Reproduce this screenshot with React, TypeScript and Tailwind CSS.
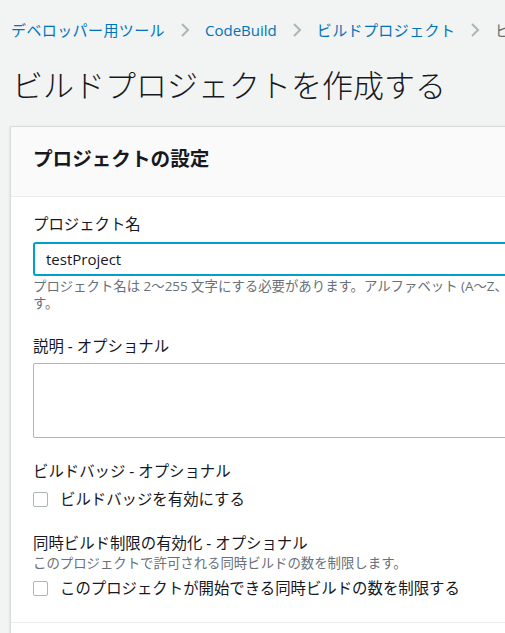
const font = { fontFamily: '"Open Sans", "Noto Sans CJK JP", sans-serif' };

function Chevron() {
  return (
    <svg width="12" height="18" viewBox="0 0 12 18" className="mx-[14px] shrink-0">
      <path d="M3 3l6 6-6 6" fill="none" stroke="#aab7b8" strokeWidth="2" />
    </svg>
  );
}

function Checkbox({ label }: { label: string }) {
  return (
    <label className="flex items-center gap-[12px] text-[15.4px] text-[#16191f]">
      <span className="h-[15px] w-[15px] shrink-0 rounded-[2px] border border-[#aab7b8] bg-white" />
      <span>{label}</span>
    </label>
  );
}

export default function App() {
  return (
    <div className="h-[633px] w-full overflow-hidden bg-[#f2f3f3]" style={font}>
      <div className="w-[900px]">
        <nav className="flex items-center whitespace-nowrap pl-[11px] pt-[19px] text-[15px] leading-[22px] tracking-[0.4px] text-[#0073bb]">
          <span>デベロッパー用ツール</span>
          <Chevron />
          <span className="tracking-normal">CodeBuild</span>
          <Chevron />
          <span>ビルドプロジェクト</span>
          <Chevron />
          <span className="text-[#687078]">ビルドプロジェクトを作成</span>
        </nav>
        <h1 className="mt-[24px] pl-[12px] text-[31px] font-light leading-[40px] text-[#16191f]">
          ビルドプロジェクトを作成する
        </h1>
        <section className="ml-[10px] mt-[21px] border-l border-t border-[#d5dbdb] bg-white shadow-sm">
          <div className="flex h-[70px] items-center border-b border-[#eaeded] bg-[#fafafa] pb-[5px] pl-[22px]">
            <h2 className="text-[19.6px] font-bold text-[#16191f]">プロジェクトの設定</h2>
          </div>
          <div className="flex flex-col pl-[22px] pr-[20px] pt-[17px] pb-[22px] text-[#16191f]">
            <div className="text-[15.4px] leading-[22px]">プロジェクト名</div>
            <div className="mt-[6px] flex h-[34px] w-[700px] items-center rounded-[3px] border-2 border-[#00a1c9] pl-[11px] text-[15px]">
              testProject
            </div>
            <div className="mt-[2px] text-[13.4px] leading-[17px] text-[#687078]">
              <div className="whitespace-nowrap">
                プロジェクト名は 2～255 文字にする必要があります。アルファベット (A～Z、a～z)、数字 (0～9)、特殊文字 (- と _) を使用できま
              </div>
              <div>す。</div>
            </div>
            <div className="mt-[24px] text-[15.4px] leading-[22px]">説明 - オプショナル</div>
            <div className="mt-[5px] h-[75px] w-[700px] rounded-[2px] border border-[#aab7b8]" />
            <div className="mt-[23px] text-[15.4px] leading-[22px]">ビルドバッジ - オプショナル</div>
            <div className="mt-[5px]">
              <Checkbox label="ビルドバッジを有効にする" />
            </div>
            <div className="mt-[22px] text-[15.4px] leading-[22px]">同時ビルド制限の有効化 - オプショナル</div>
            <div className="text-[13.4px] leading-[17px] text-[#687078]">
              このプロジェクトで許可される同時ビルドの数を制限します。
            </div>
            <div className="mt-[5px]">
              <Checkbox label="このプロジェクトが開始できる同時ビルドの数を制限する" />
            </div>
          </div>
          <div className="h-[40px] border-t border-[#eaeded]" />
        </section>
      </div>
    </div>
  );
}
